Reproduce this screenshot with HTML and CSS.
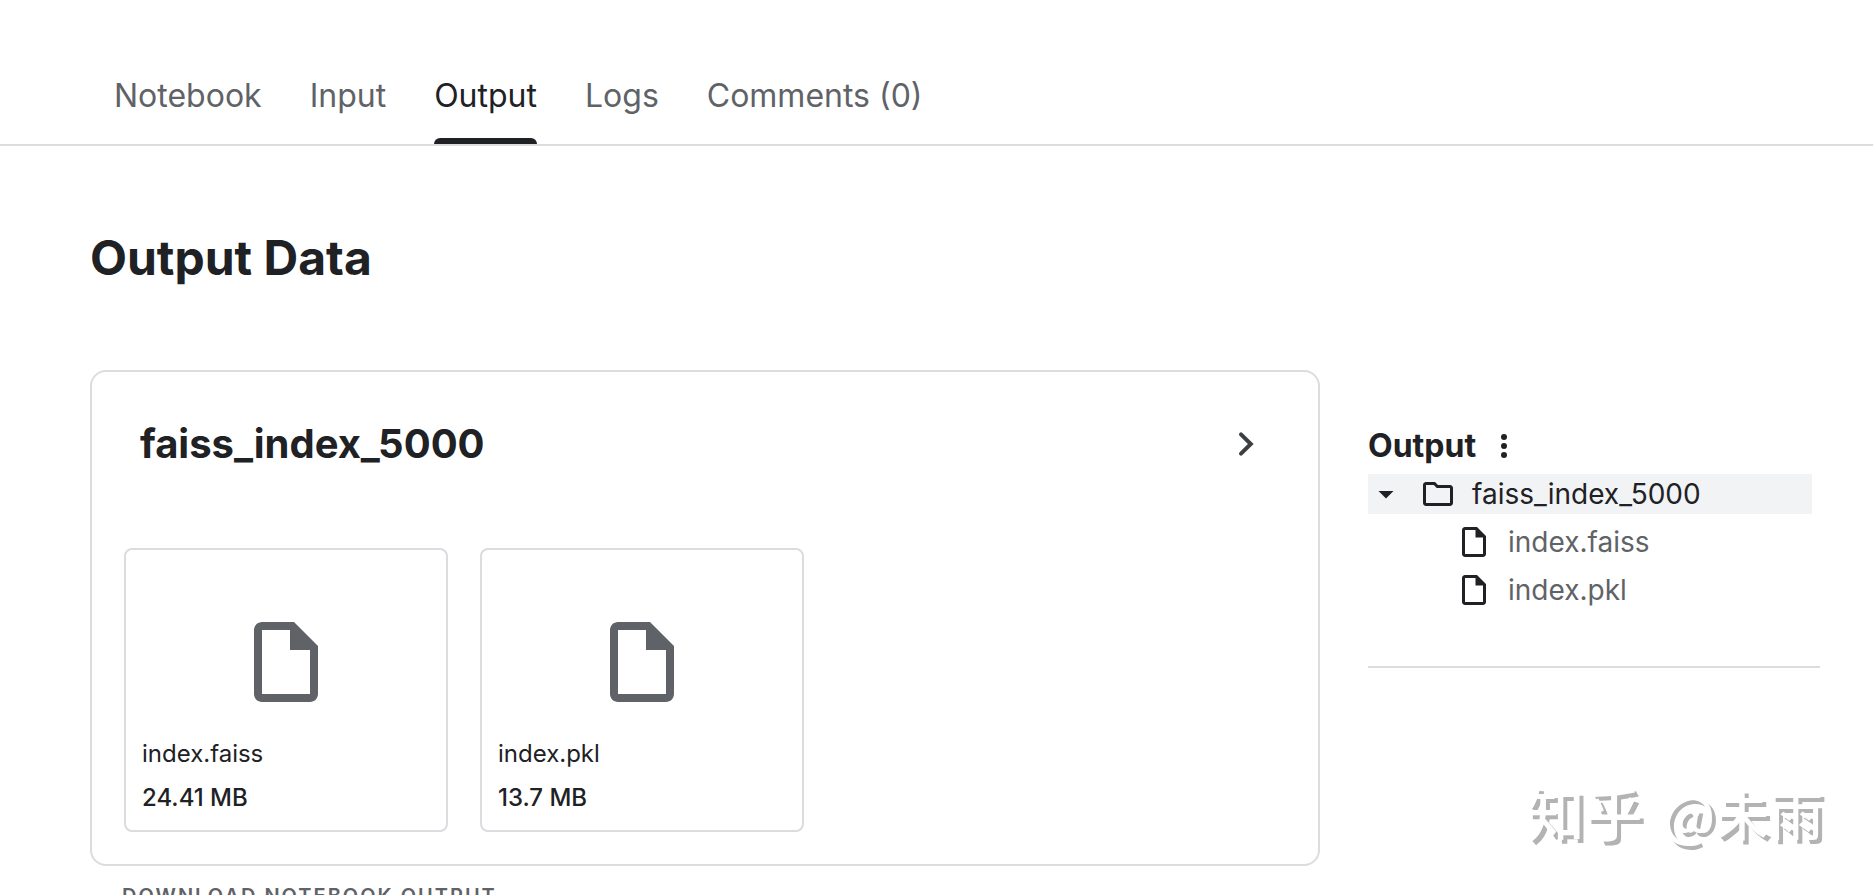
FILE: index.html
```html
<!DOCTYPE html>
<html lang="en">
  <head>
    <meta charset="UTF-8" />
    <meta name="viewport" content="width=device-width, initial-scale=1.0" />
    <title>Output Data</title>
    <link rel="stylesheet" href="styles.css">
  </head>
  <body>
    <!-- Shared icons -->
    <svg class="icon-defs" aria-hidden="true">
      <symbol id="icon-file" viewBox="0 0 24 24">
        <path d="M14 2H6c-1.1 0-2 .9-2 2v16c0 1.1.9 2 2 2h12c1.1 0 2-.9 2-2V8l-6-6zM6 20V4h7v5h5v11H6z" />
      </symbol>
    </svg>

    <nav class="tabs">
      <a class="tab" href="#notebook">Notebook</a>
      <a class="tab" href="#input">Input</a>
      <a class="tab active" href="#output" aria-current="page">Output</a>
      <a class="tab" href="#logs">Logs</a>
      <a class="tab" href="#comments">Comments (0)</a>
    </nav>

    <main class="content">
      <h1>Output Data</h1>

      <div class="columns">
        <div class="main-column">
          <section class="card">
            <header class="card-header">
              <h2>faiss_index_5000</h2>
              <button class="icon-button" type="button" aria-label="Open folder">
                <svg class="chevron" viewBox="0 0 24 24">
                  <path d="M9.5 7.2L14.4 12l-4.9 4.8" />
                </svg>
              </button>
            </header>
            <div class="tiles">
              <a class="tile" href="#index.faiss">
                <svg class="tile-icon"><use href="#icon-file" /></svg>
                <span class="tile-name">index.faiss</span>
                <span class="tile-size">24.41 MB</span>
              </a>
              <a class="tile" href="#index.pkl">
                <svg class="tile-icon"><use href="#icon-file" /></svg>
                <span class="tile-name">index.pkl</span>
                <span class="tile-size">13.7 MB</span>
              </a>
            </div>
          </section>
          <h3 class="download-title">Download notebook output</h3>
        </div>

        <aside class="sidebar">
          <div class="sidebar-header">
            <h2>Output</h2>
            <button class="icon-button" type="button" aria-label="More options">
              <svg class="icon" viewBox="0 0 24 24">
                <circle cx="12" cy="6" r="2" />
                <circle cx="12" cy="12" r="2" />
                <circle cx="12" cy="18" r="2" />
              </svg>
            </button>
          </div>
          <ul class="tree">
            <li>
              <button class="tree-row folder" type="button" aria-expanded="true">
                <svg class="icon" viewBox="0 0 24 24"><path d="M7 10l5 5 5-5z" /></svg>
                <svg class="icon" viewBox="0 0 24 24">
                  <path d="M9.17 6l2 2H20v10H4V6h5.17M10 4H4c-1.1 0-2 .9-2 2v12c0 1.1.9 2 2 2h16c1.1 0 2-.9 2-2V8c0-1.1-.9-2-2-2h-8l-2-2z" />
                </svg>
                faiss_index_5000
              </button>
              <ul class="tree">
                <li>
                  <a class="tree-row file" href="#index.faiss">
                    <svg class="icon"><use href="#icon-file" /></svg>
                    <span>index.faiss</span>
                  </a>
                </li>
                <li>
                  <a class="tree-row file" href="#index.pkl">
                    <svg class="icon"><use href="#icon-file" /></svg>
                    <span>index.pkl</span>
                  </a>
                </li>
              </ul>
            </li>
          </ul>
        </aside>
      </div>
    </main>

    <div class="watermark" lang="zh-CN">
      <span class="watermark-site">知乎</span>
      <span>@未雨</span>
    </div>
  </body>
</html>
```
FILE: styles.css
```css
* {
  box-sizing: border-box;
}
body {
  margin: 0;
  position: relative;
  height: 100vh;
  overflow: hidden;
  font-family: Inter, sans-serif;
  background-color: #fff;
  color: #202124;
}
h1,
h2,
h3,
ul {
  margin: 0;
  padding: 0;
}
a {
  color: inherit;
  text-decoration: none;
}
button {
  padding: 0;
  border: none;
  background: none;
  font: inherit;
  color: inherit;
  cursor: pointer;
}
svg {
  display: block;
  fill: currentColor;
}
.icon-defs {
  display: none;
}
.icon {
  width: 36px;
  height: 36px;
  flex: none;
}

/* Tabs */
.tabs {
  display: flex;
  gap: 48px;
  padding: 48px 114px 0;
  border-bottom: 2px solid #dadce0;
}
.tab {
  height: 96px;
  font-size: 32px;
  line-height: 96px;
  color: #5f6368;
}
.tab.active {
  color: #202124;
}
.tab.active::after {
  content: "";
  display: block;
  height: 6px;
  margin-top: -6px;
  border-radius: 6px 6px 0 0;
  background-color: #202124;
}

/* Page */
.content {
  padding: 82px 53px 0 90px;
}
h1 {
  font-size: 48px;
  line-height: 60px;
  font-weight: 700;
}
.columns {
  display: flex;
  gap: 48px;
  margin-top: 82px;
}
.main-column {
  flex: 1;
}
.card {
  padding: 48px 32px 32px;
  border: 2px solid #dadce0;
  border-radius: 16px;
}
.card-header {
  display: flex;
  align-items: center;
  justify-content: space-between;
  padding: 0 16px;
}
.card-header h2 {
  font-size: 40px;
  line-height: 48px;
}
.chevron {
  width: 48px;
  height: 48px;
  fill: none;
  stroke: #3c4043;
  stroke-width: 2;
  stroke-linecap: round;
}
.tiles {
  display: flex;
  gap: 32px;
  margin-top: 80px;
}
.tile {
  display: flex;
  flex-direction: column;
  width: 324px;
  padding: 64px 16px 10px;
  border: 2px solid #dadce0;
  border-radius: 8px;
  font-size: 24px;
  line-height: 44px;
}
.tile-icon {
  width: 96px;
  height: 96px;
  margin: 0 auto 22px;
  color: #5f6368;
}
.tile-size {
  font-weight: 500;
}
.download-title {
  margin: 16px 32px 0;
  font-size: 20px;
  line-height: 28px;
  font-weight: 600;
  letter-spacing: 2px;
  text-transform: uppercase;
  color: #5f6368;
}

/* File tree */
.sidebar {
  width: 452px;
  margin-top: 56px;
}
.sidebar-header {
  display: flex;
  align-items: center;
  gap: 10px;
  margin-bottom: 8px;
}
.sidebar-header h2 {
  font-size: 32px;
  line-height: 40px;
}
.tree {
  display: flex;
  flex-direction: column;
  gap: 8px;
  list-style: none;
}
.tree .tree {
  margin-top: 8px;
}
.sidebar > .tree {
  padding: 0 8px 56px 0;
}
.sidebar::after {
  content: "";
  display: block;
  height: 2px;
  background-color: #dadce0;
}
.tree-row {
  display: flex;
  align-items: center;
  gap: 16px;
  width: 100%;
  height: 40px;
  font-size: 28px;
}
.tree-row.folder {
  background-color: #f1f3f4;
}
.tree-row.file {
  padding-left: 88px;
}
.tree-row.file span {
  color: #5f6368;
}

.watermark {
  position: absolute;
  right: 50px;
  bottom: 50px;
  display: flex;
  align-items: baseline;
  gap: 20px;
  font-family: "Noto Sans CJK SC", sans-serif;
  font-size: 54px;
  font-weight: 500;
  line-height: 64px;
  color: #fff;
  text-shadow: 4px 4px 0 #b3b3b3;
}
.watermark-site {
  font-size: 58px;
}
```
